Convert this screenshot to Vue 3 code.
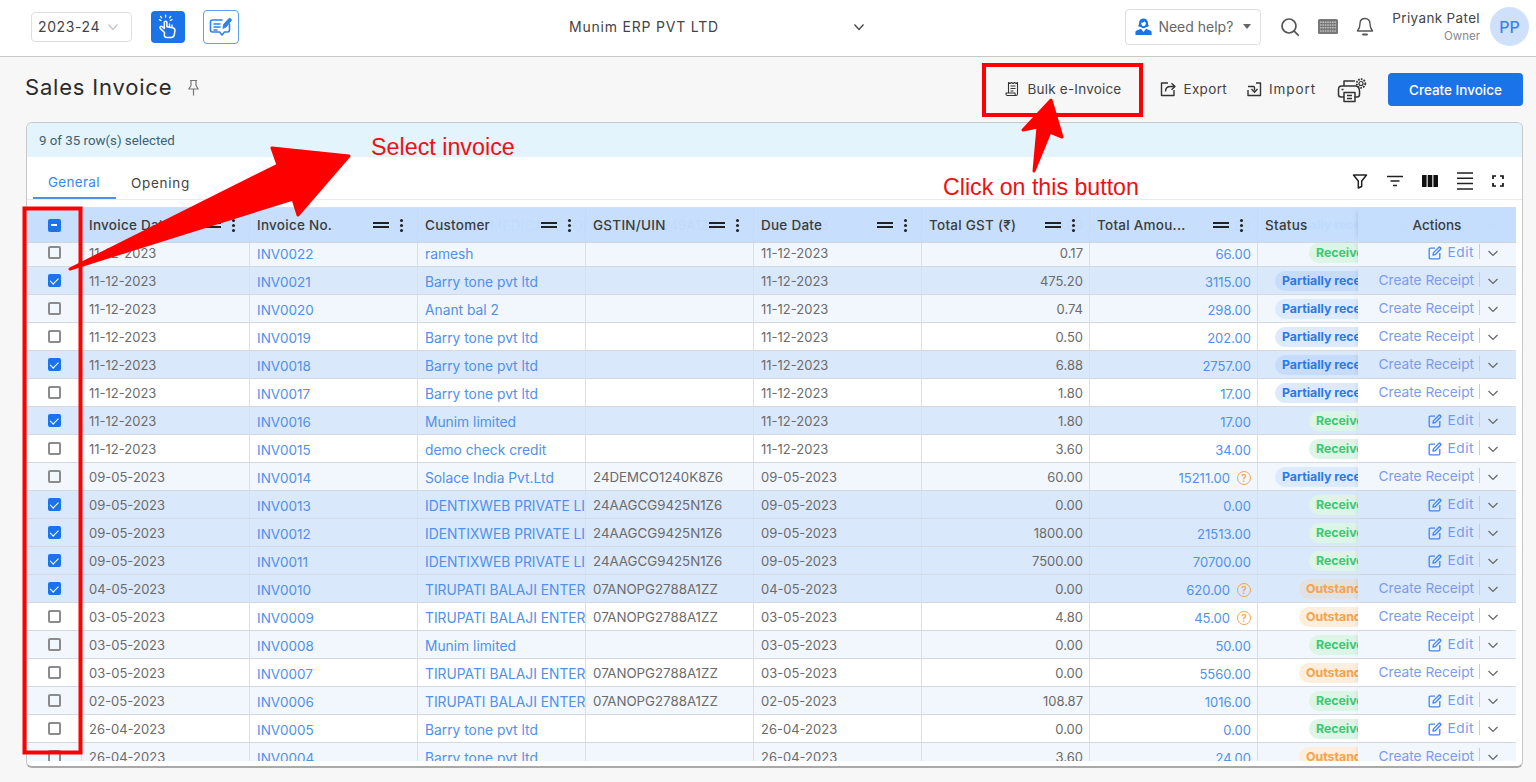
<template>
  <div class="page">
    <header class="topbar">
      <div class="top-left">
        <div class="year-select">
          <span>2023-24</span>
          <svg width="12" height="12" viewBox="0 0 12 12" fill="none" stroke="#c4c4c4" stroke-width="1.2"><path d="M1.5 3.5 6 8.5l4.5-5" /></svg>
        </div>
        <button class="square-btn solid">
          <svg width="24" height="26" viewBox="0 0 24 26" fill="none" stroke="#fff" stroke-width="1.5" stroke-linejoin="round" stroke-linecap="round">
            <path d="M8.5 18.5 4.4 14.6c-1.3-1.4.5-3 1.9-1.8l2 1.7V8.6c0-1.8 2.6-1.8 2.6 0v4.2l5.6 1c1.6.3 2.6 1.5 2.4 3.1l-.6 3.8c-.2 1.5-1.3 2.8-3 2.8h-4.4c-1.1 0-1.9-.5-2.5-1.3z" />
            <path d="M13.5 13V10M16 13.4V11M5 6.5 3.3 5.6M5.6 3.8 4.5 2.4M9.6 3V1.2M13.6 3.8l1.1-1.4M14.3 6.5l1.7-.9" stroke-width="1.3" />
          </svg>
        </button>
        <button class="square-btn outline">
          <svg width="24" height="22" viewBox="0 0 24 22" fill="none" stroke="#2f80ed" stroke-width="1.6" stroke-linejoin="round" stroke-linecap="round">
            <path d="M13 4H3.5C2.4 4 1.5 4.9 1.5 6v8c0 1.1.9 2 2 2h7l2.5 3 2.5-3h3c1.1 0 2-.9 2-2V8" />
            <path d="M5 8h6M5 11h6M5 14h3" />
            <path d="M14 12 14.6 8.5 20 2.4c.6-.7 3 1.300 2.400 2L17.200 10.800z" fill="#2f80ed" stroke-width="1" />
          </svg>
        </button>
      </div>
      <div class="company">
        <span>Munim ERP PVT LTD</span>
        <svg width="12" height="12" viewBox="0 0 12 12" fill="none" stroke="#444" stroke-width="1.3"><path d="M1.500 3.500 6 8.500l4.500-5" /></svg>
      </div>
      <div class="top-right">
        <button class="help-btn">
          <svg width="20" height="21" viewBox="0 0 20 21" fill="#1a73e8">
            <path d="M10 1C6.800 1 4.800 3.400 4.800 6.500c0 1.600-.5 2.700-1.300 3.500.9.800 2.300 1.100 3.500 1 .8 1 1.900 1.500 3 1.500s2.200-.5 3-1.500c1.200.1 2.600-.2 3.500-1-.8-.8-1.300-1.900-1.300-3.500C15.200 3.400 13.200 1 10 1z" />
            <path d="M7 13.200 1.500 15.500c-.7.300-1 1-1 1.700V20.500h19v-3.300c0-.7-.3-1.400-1-1.700L13 13.200l-3 3.800z" />
            <path d="M7.200 6.200c1.500 0 3-.7 3.800-2 .5 1 1.100 1.700 1.900 2 0 2.300-1.300 4-2.900 4s-2.800-1.700-2.800-4z" fill="#fff" />
          </svg>
          <span class="help-text">Need help?</span>
          <i class="caret"></i>
        </button>
        <svg class="top-icon search" width="20" height="20" viewBox="0 0 20 20" fill="none" stroke="#555" stroke-width="1.700" stroke-linecap="round"><circle cx="9" cy="9" r="7" /><path d="m14.200 14.200 4 4" /></svg>
        <svg class="top-icon" width="20" height="15" viewBox="0 0 20 15"><rect width="20" height="15" rx="1.500" fill="#777" /><path d="M2 3.200h16M2 6h16M2 8.800h16M2 12h16" stroke="#e2e2e2" stroke-width="1" stroke-dasharray="1.600 .8" /></svg>
        <svg class="top-icon" width="18" height="20" viewBox="0 0 18 20" fill="none" stroke="#555" stroke-width="1.400" stroke-linejoin="round"><path d="M9 1.500c-3.200 0-5 2.300-5 5.200 0 3.800-.6 5-2.500 7.300h15c-1.900-2.300-2.500-3.500-2.500-7.300 0-2.900-1.800-5.200-5-5.200z" /><path d="M7 17.500h4" stroke-width="1.800" stroke-linecap="round" /></svg>
        <div class="user">
          <div class="user-name">Priyank Patel</div>
          <div class="user-role">Owner</div>
        </div>
        <div class="avatar">PP</div>
      </div>
    </header>

    <main class="content">
      <div class="title-row">
        <h1>Sales Invoice</h1>
        <svg class="pin" width="13" height="18" viewBox="0 0 13 18" fill="none" stroke="#777" stroke-width="1.200" stroke-linejoin="round"><path d="M3 1.500h7M4 1.500v5L1.800 10h9.400L9 6.500v-5M6.500 10v6.500" /></svg>
        <div class="actions">
          <a class="tool bulk">
            <svg width="16" height="16" viewBox="0 0 16 16" fill="none" stroke="#333" stroke-width="1.100" stroke-linejoin="round"><path d="M3.500 12V1.500l1.500 1 1.500-1 1.500 1 1.500-1 1.500 1 1.500-1V13c0 1 -.6 1.500 -1.500 1.500H2.500c-1 0-1.500-.7-1.500-1.500v-1h9v1c0 .8.500 1.500 1.500 1.500" /><path d="M5.500 5h5M5.500 7.500h5M5.500 10h3" /></svg>
            <span>Bulk e-Invoice</span>
          </a>
          <a class="tool export">
            <svg width="16" height="16" viewBox="0 0 16 16" fill="none" stroke="#333" stroke-width="1.400" stroke-linejoin="round"><path d="M8 2H1.500v12.500H14V9" /><path d="M5.500 10.500c0-3 1.800-5 5-5h4M11.500 2.300 15 5.500l-3.500 3.200" /></svg>
            <span>Export</span>
          </a>
          <a class="tool import">
            <svg width="16" height="16" viewBox="0 0 16 16" fill="none" stroke="#333" stroke-width="1.400" stroke-linejoin="round"><path d="M10 2h4.500v12.500H2V9" /><path d="M2 5.500h5.500c.7 0 1 .5 1 1v3" /><path d="M5.500 8 8.500 11.200 11.500 8" /></svg>
            <span>Import</span>
          </a>
          <svg class="printer" width="30" height="26" viewBox="0 0 30 26" fill="none" stroke="#333" stroke-width="1.500" stroke-linejoin="round">
            <path d="M7 9V4h11" />
            <path d="M7 20H4c-1.500 0-2.500-1-2.500-2.500v-5C1.500 10.500 2.500 9 4.500 9h14c1.500 0 3 1 3.500 2.500.3 1 .5 2 .5 3V17.500c0 1.500-1 2.500-2.500 2.500h-2.500" />
            <path d="M7 15.500h11V24.500H7z" />
            <path d="M10 18.500h5M10 21.500h5M4.500 12.500h2" />
            <circle cx="24" cy="6.500" r="2" stroke-width="1.200" />
            <circle cx="24" cy="6.500" r="4.300" stroke-width="1.800" stroke-dasharray="1.700 1.100" />
          </svg>
          <button class="create-btn">Create Invoice</button>
        </div>
      </div>

      <section class="card">
        <div class="banner">9 of 35 row(s) selected</div>
        <div class="tabs-row">
          <div class="tab active">General</div>
          <div class="tab">Opening</div>
          <div class="toolbar">
            <svg width="16" height="16" viewBox="0 0 16 16" fill="none" stroke="#222" stroke-width="1.500" stroke-linejoin="round"><path d="M1.500 2h13L9.700 8v5.500L6.300 15V8z" /></svg>
            <svg width="16" height="12" viewBox="0 0 16 12" fill="none" stroke="#222" stroke-width="1.600"><path d="M0 1.500h16M3.500 6h9M6 10.500h4" /></svg>
            <svg width="16" height="12" viewBox="0 0 16 12" fill="#111"><rect width="4.600" height="12" rx=".5" /><rect x="5.700" width="4.600" height="12" rx=".5" /><rect x="11.400" width="4.600" height="12" rx=".5" /></svg>
            <svg width="16" height="18" viewBox="0 0 16 18" fill="none" stroke="#222" stroke-width="1.500"><path d="M0 1h16M0 6.300h16M0 11.600h16M0 17h16" /></svg>
            <svg width="12" height="12" viewBox="0 0 12 12" fill="none" stroke="#111" stroke-width="1.700"><path d="M1 4V1h3M8 1h3v3M11 8v3H8M4 11H1V8" /></svg>
          </div>
        </div>

        <div class="grid-wrap">
          <div class="grid-head">
            <div class="cell check-cell"><span class="check partial"></span></div>
            <div v-for="col in columns" :key="col" class="cell head-cell">
              <span class="head-label">{{ col }}</span>
              <i class="grip"></i>
              <i class="kebab"></i>
            </div>
            <div class="cell head-cell status-head"><span class="head-label">Status</span></div>
            <div class="cell actions-head">Actions</div>
          </div>

          <div class="grid-body">
            <div
              v-for="row in rows"
              :key="row.no"
              :class="['row', { selected: row.selected, even: Number(row.no.slice(-2)) % 2 === 0 }]"
            >
              <div class="cell check-cell"><span :class="['check', { on: row.selected }]"></span></div>
              <div class="cell muted">{{ row.date }}</div>
              <div class="cell link">{{ row.no }}</div>
              <div class="cell link customer">{{ row.customer }}</div>
              <div class="cell muted gstin">{{ row.gstin }}</div>
              <div class="cell muted">{{ row.date }}</div>
              <div class="cell muted num">{{ row.gst }}</div>
              <div class="cell link num">
                <span>{{ row.total }}</span>
                <span v-if="row.warn" class="warn">?</span>
              </div>
              <div class="cell status-cell">
                <span :class="['chip', row.status]">{{ statusLabels[row.status] }}</span>
              </div>
              <div class="cell action-cell">
                <template v-if="row.status === 'received'">
                  <svg width="14" height="14" viewBox="0 0 14 14" fill="none" stroke="#3f86ee" stroke-width="1.300" stroke-linejoin="round"><path d="M7 2.200H2.200c-.6 0-1 .4-1 1v8.600c0 .6.400 1 1 1h8.600c.6 0 1-.4 1-1V7" /><path d="M5 9.200l.4-2.300L11 1.300c.3-.3.700-.3 1 0l.7.700c.3.300.3.700 0 1L7.200 8.700z" /></svg>
                  <span class="action-text edit">Edit</span>
                </template>
                <span v-else class="action-text">Create Receipt</span>
                <i class="divider"></i>
                <svg width="12" height="12" viewBox="0 0 12 12" fill="none" stroke="#666" stroke-width="1.200"><path d="M1.500 4 6 8.500 10.500 4" /></svg>
              </div>
            </div>
          </div>
        </div>
      </section>
    </main>

    <!-- tutorial annotations drawn on top of the screen -->
    <svg class="marks" width="1536" height="782" viewBox="0 0 1536 782">
      <rect x="24.500" y="208.500" width="56" height="544" fill="none" stroke="#f00" stroke-width="4" />
      <rect x="984" y="65" width="157" height="50" fill="none" stroke="#f00" stroke-width="4" />
      <path d="M70 269 278 165 272 148 349 156 298 215 293 199z" fill="#f00" stroke="#f00" stroke-width="3" stroke-linejoin="round" />
      <path d="M1051 100 1062 137 1050 132 1034 171 1038 127 1023 130z" fill="#f00" stroke="#f00" stroke-width="3" stroke-linejoin="round" />
    </svg>
    <div class="note note-select">Select invoice</div>
    <div class="note note-click">Click on this button</div>
  </div>
</template>

<script setup>
const columns = ['Invoice Date', 'Invoice No.', 'Customer', 'GSTIN/UIN', 'Due Date', 'Total GST (₹)', 'Total Amou...']

const statusLabels = {
  received: 'Received',
  partial: 'Partially received',
  outstanding: 'Outstanding'
}

const barry = 'Barry tone pvt ltd'
const identix = 'IDENTIXWEB PRIVATE LIMITED'
const tirupati = 'TIRUPATI BALAJI ENTERPRISES'

const rows = [
  { no: 'INV0023', date: '11-12-2023', customer: 'KRISHNA MEDICAL STORE', gstin: '24AAACK1049A1Z5', gst: '9.00', total: '118.00', status: 'partial' },
  { no: 'INV0022', date: '11-12-2023', customer: 'ramesh', gstin: '', gst: '0.17', total: '66.00', status: 'received' },
  { no: 'INV0021', date: '11-12-2023', customer: barry, gstin: '', gst: '475.20', total: '3115.00', status: 'partial', selected: true },
  { no: 'INV0020', date: '11-12-2023', customer: 'Anant bal 2', gstin: '', gst: '0.74', total: '298.00', status: 'partial' },
  { no: 'INV0019', date: '11-12-2023', customer: barry, gstin: '', gst: '0.50', total: '202.00', status: 'partial' },
  { no: 'INV0018', date: '11-12-2023', customer: barry, gstin: '', gst: '6.88', total: '2757.00', status: 'partial', selected: true },
  { no: 'INV0017', date: '11-12-2023', customer: barry, gstin: '', gst: '1.80', total: '17.00', status: 'partial' },
  { no: 'INV0016', date: '11-12-2023', customer: 'Munim limited', gstin: '', gst: '1.80', total: '17.00', status: 'received', selected: true },
  { no: 'INV0015', date: '11-12-2023', customer: 'demo check credit', gstin: '', gst: '3.60', total: '34.00', status: 'received' },
  { no: 'INV0014', date: '09-05-2023', customer: 'Solace India Pvt.Ltd', gstin: '24DEMCO1240K8Z6', gst: '60.00', total: '15211.00', status: 'partial', warn: true },
  { no: 'INV0013', date: '09-05-2023', customer: identix, gstin: '24AAGCG9425N1Z6', gst: '0.00', total: '0.00', status: 'received', selected: true },
  { no: 'INV0012', date: '09-05-2023', customer: identix, gstin: '24AAGCG9425N1Z6', gst: '1800.00', total: '21513.00', status: 'received', selected: true },
  { no: 'INV0011', date: '09-05-2023', customer: identix, gstin: '24AAGCG9425N1Z6', gst: '7500.00', total: '70700.00', status: 'received', selected: true },
  { no: 'INV0010', date: '04-05-2023', customer: tirupati, gstin: '07ANOPG2788A1ZZ', gst: '0.00', total: '620.00', status: 'outstanding', warn: true, selected: true },
  { no: 'INV0009', date: '03-05-2023', customer: tirupati, gstin: '07ANOPG2788A1ZZ', gst: '4.80', total: '45.00', status: 'outstanding', warn: true },
  { no: 'INV0008', date: '03-05-2023', customer: 'Munim limited', gstin: '', gst: '0.00', total: '50.00', status: 'received' },
  { no: 'INV0007', date: '03-05-2023', customer: tirupati, gstin: '07ANOPG2788A1ZZ', gst: '0.00', total: '5560.00', status: 'outstanding' },
  { no: 'INV0006', date: '02-05-2023', customer: tirupati, gstin: '07ANOPG2788A1ZZ', gst: '108.87', total: '1016.00', status: 'received' },
  { no: 'INV0005', date: '26-04-2023', customer: barry, gstin: '', gst: '0.00', total: '0.00', status: 'received' },
  { no: 'INV0004', date: '26-04-2023', customer: barry, gstin: '', gst: '3.60', total: '24.00', status: 'outstanding' }
]
</script>

<style>
html,
body {
  margin: 0;
  background: #f7f7f7;
}
</style>

<style scoped>
.page {
  position: relative;
  display: flex;
  flex-direction: column;
  height: 782px;
  overflow: hidden;
  font-family: Inter, "Open Sans", sans-serif;
  color: #333;
}

.topbar {
  display: flex;
  align-items: center;
  height: 57px;
  padding: 0 7px 3px 31px;
  box-sizing: border-box;
  background: #fff;
  border-bottom: 1px solid #c9c9c9;
  flex-shrink: 0;
}

.top-left {
  display: flex;
  align-items: center;
}

.year-select {
  display: flex;
  align-items: center;
  justify-content: space-between;
  width: 101px;
  height: 30px;
  padding: 0 12px 0 6px;
  box-sizing: border-box;
  border: 1px solid #dedede;
  border-radius: 4px;
  font-size: 14px;
  letter-spacing: 0.6px;
  color: #444;
}

.square-btn {
  display: flex;
  align-items: center;
  justify-content: center;
  padding: 0;
  box-sizing: border-box;
  border-radius: 4px;
}

.square-btn.solid {
  width: 34px;
  height: 32px;
  margin-left: 19px;
  background: #1a73e8;
  border: 0;
}

.square-btn.outline {
  width: 36px;
  height: 34px;
  margin-left: 18px;
  background: #fff;
  border: 1.500px solid #5a9ff0;
}

.company {
  display: flex;
  align-items: center;
  justify-content: space-between;
  width: 296px;
  margin-left: 330px;
  font-size: 14px;
  letter-spacing: 0.8px;
  color: #444;
}

.top-right {
  display: flex;
  align-items: center;
  margin-left: auto;
}

.help-btn {
  display: flex;
  align-items: center;
  gap: 6px;
  width: 136px;
  height: 36px;
  padding: 0 9px;
  box-sizing: border-box;
  background: #fff;
  border: 1px solid #dedede;
  border-radius: 4px;
  font: 14px Inter, sans-serif;
  color: #666;
}

.help-text {
  white-space: nowrap;
}

.caret {
  margin-left: 4px;
  border: 4.500px solid transparent;
  border-top: 5px solid #666;
  border-bottom: 0;
}

.top-icon {
  margin-left: 18px;
}

.top-icon.search {
  margin-left: 19px;
}

.user {
  margin-left: 18px;
  text-align: right;
}

.user-name {
  font-size: 13.500px;
  letter-spacing: 0.35px;
  color: #444;
}

.user-role {
  margin-top: 3px;
  font-size: 11.500px;
  color: #888;
}

.avatar {
  display: flex;
  align-items: center;
  justify-content: center;
  width: 39px;
  height: 39px;
  margin-left: 10px;
  border-radius: 50%;
  background: #cfe1fa;
  color: #3b82ee;
  font-size: 16px;
  font-weight: 500;
}

.content {
  display: flex;
  flex-direction: column;
  flex: 1;
  min-height: 0;
  padding: 0 13px 14px 26px;
  background: #f7f7f7;
}

.title-row {
  display: flex;
  align-items: center;
  height: 65px;
  flex-shrink: 0;
}

h1 {
  margin: 0 0 5px -1px;
  font-size: 22px;
  font-weight: 400;
  letter-spacing: 0.8px;
  color: #2b2b2b;
}

.pin {
  margin: 0 0 3px 15px;
}

.actions {
  display: flex;
  align-items: center;
  margin-left: auto;
}

.tool {
  display: flex;
  align-items: center;
  gap: 7px;
  padding-bottom: 2px;
  font-size: 13.500px;
  letter-spacing: 0.35px;
  color: #444;
}

.bulk {
  letter-spacing: 0.2px;
}

.export {
  margin-left: 39px;
}

.import {
  margin-left: 19px;
  letter-spacing: 0.9px;
}

.printer {
  margin-left: 21px;
}

.create-btn {
  width: 135px;
  height: 33px;
  margin-left: 21px;
  background: #1a73e8;
  border: 0;
  border-radius: 4px;
  color: #fff;
  font: 500 13.500px Inter, sans-serif;
}

.card {
  display: flex;
  flex-direction: column;
  flex: 1;
  min-height: 0;
  overflow: hidden;
  background: #fff;
  border: 1px solid #c8c8c8;
  border-bottom: 2px solid #a9a9a9;
  border-radius: 6px;
}

.banner {
  height: 34px;
  padding: 0 12px;
  box-sizing: border-box;
  display: flex;
  align-items: center;
  background: #e3f4fc;
  font: 13.300px Roboto, sans-serif;
  color: #3d6072;
  flex-shrink: 0;
}

.tabs-row {
  display: flex;
  align-items: stretch;
  height: 43px;
  margin-bottom: 7px;
  padding-left: 6px;
  border-bottom: 1px solid #eaeaea;
  box-sizing: border-box;
  flex-shrink: 0;
}

.tab {
  display: flex;
  align-items: center;
  padding: 9px 15px 0;
  font-size: 13.500px;
  letter-spacing: 0.7px;
  color: #444;
}

.tab.active {
  width: 83px;
  box-sizing: border-box;
  letter-spacing: 0.3px;
  color: #3b86ee;
  border-bottom: 2px solid #4d90ee;
}

.toolbar {
  display: flex;
  align-items: center;
  gap: 19px;
  margin-left: auto;
  padding: 6px 18px 0 0;
}

.grid-wrap {
  position: relative;
  flex: 1;
  min-height: 0;
  margin: 0 6px 5px 0;
  overflow: hidden;
}

.grid-head,
.row {
  display: grid;
  grid-template-columns: 55px repeat(7, 168px) 100px 158px;
}

.grid-head {
  position: absolute;
  top: 0;
  left: 0;
  right: 0;
  z-index: 2;
  height: 36px;
  background: rgba(197, 222, 253, 0.96);
  border-top: 1px solid #d8dde4;
  border-bottom: 1px solid #d0d6de;
  box-sizing: border-box;
}

.grid-body {
  padding-top: 4px;
}

.row {
  height: 28px;
  box-sizing: border-box;
  background: #fff;
  border-bottom: 1px solid #d5d9df;
}

.row.even {
  background: #f2f7fe;
}

.row.selected {
  background: #dae8fb;
}

.cell {
  display: flex;
  align-items: center;
  min-width: 0;
  padding: 0 7px;
  box-sizing: border-box;
  border-right: 1px solid #dcdfe4;
  font-size: 13px;
  white-space: nowrap;
  overflow: hidden;
}

.check-cell {
  justify-content: center;
  padding: 0;
}

.check {
  position: relative;
  width: 13px;
  height: 13px;
  box-sizing: border-box;
  border: 2px solid #8b8b8b;
  border-radius: 2px;
}

.check.on,
.check.partial {
  background: #1a73e8;
  border-color: #1a73e8;
}

.check.on::after {
  content: "";
  position: absolute;
  left: 2.500px;
  top: 0;
  width: 3.500px;
  height: 6.500px;
  border: solid #fff;
  border-width: 0 1.500px 1.500px 0;
  transform: rotate(45deg);
}

.check.partial::after {
  content: "";
  position: absolute;
  left: 1.500px;
  top: 3.500px;
  width: 6px;
  height: 2px;
  background: #fff;
}

.head-cell {
  gap: 0;
  padding-right: 14px;
  font-size: 13.500px;
  color: #3c3c3c;
  font-weight: 500;
  border-right: 1px solid #cfd8e4;
}

.head-label {
  flex: 1;
  letter-spacing: 0.25px;
}

.grip {
  width: 16px;
  height: 2px;
  border-top: 2px solid #222;
  border-bottom: 2px solid #222;
  margin-right: 11px;
}

.kebab {
  width: 3px;
  height: 3px;
  border-radius: 50%;
  background: #222;
  box-shadow: 0 -5px 0 #222, 0 5px 0 #222;
}

.status-head {
  border-right: 0;
}

.actions-head {
  justify-content: center;
  font-size: 13.500px;
  color: #3c3c3c;
  font-weight: 500;
  border-right: 0;
  background: rgba(197, 222, 253, 0.6);
  box-shadow: -3px 0 5px -3px rgba(0, 0, 0, 0.15);
  overflow: visible;
}

.muted {
  color: #6b6b6b;
}

.gstin {
  font-size: 13.300px;
}

.link {
  padding-top: 2px;
  font-size: 13.500px;
  color: #5091ea;
}

.customer {
  font-size: 13.800px;
}

.num {
  justify-content: flex-end;
  padding-right: 6px;
  font-size: 13px;
}

.warn {
  display: flex;
  align-items: center;
  justify-content: center;
  width: 12px;
  height: 12px;
  margin-left: 7px;
  border: 1.500px solid #f4a54e;
  border-radius: 50%;
  color: #f4a54e;
  font-size: 10px;
  font-weight: 600;
}

.status-cell {
  padding: 0;
  border-right: 0;
}

.chip {
  height: 20px;
  padding: 0 7px;
  border-radius: 10px;
  font-size: 12.300px;
  font-weight: 700;
  line-height: 20px;
}

.chip.received {
  margin-left: 51px;
  background: #dcf5e6;
  color: #3cc873;
}

.chip.partial {
  margin-left: 17px;
  background: #c6dcfa;
  color: #2a7ae8;
}

.row:not(.selected) .chip.partial {
  background: #dceafc;
}

.chip.outstanding {
  margin-left: 41px;
  background: #fdeedd;
  color: #f8a24b;
}

.row.selected .chip.outstanding {
  background: #e1e1e1;
}

.action-cell {
  justify-content: flex-end;
  gap: 6px;
  padding-right: 17px;
  background: inherit;
  border-right: 0;
  box-shadow: -3px 0 5px -3px rgba(0, 0, 0, 0.12);
  overflow: visible;
}

.action-text {
  padding-bottom: 2px;
  margin-right: -1px;
  font-size: 13.700px;
  color: #7c9bef;
}

.action-text.edit {
  letter-spacing: 0.5px;
  color: #6f9df2;
}

.divider {
  width: 1px;
  height: 15px;
  margin: 0 1px 2px 0;
  background: #c9ced6;
}

.marks {
  position: absolute;
  top: 0;
  left: 0;
  z-index: 5;
  pointer-events: none;
}

.note {
  position: absolute;
  z-index: 6;
  font-family: "Liberation Sans", Arial, sans-serif;
  color: #f01010;
  white-space: nowrap;
  line-height: 1;
}

.note-select {
  left: 371px;
  top: 136px;
  font-size: 23.300px;
}

.note-click {
  left: 943px;
  top: 176px;
  font-size: 23.200px;
}
</style>
